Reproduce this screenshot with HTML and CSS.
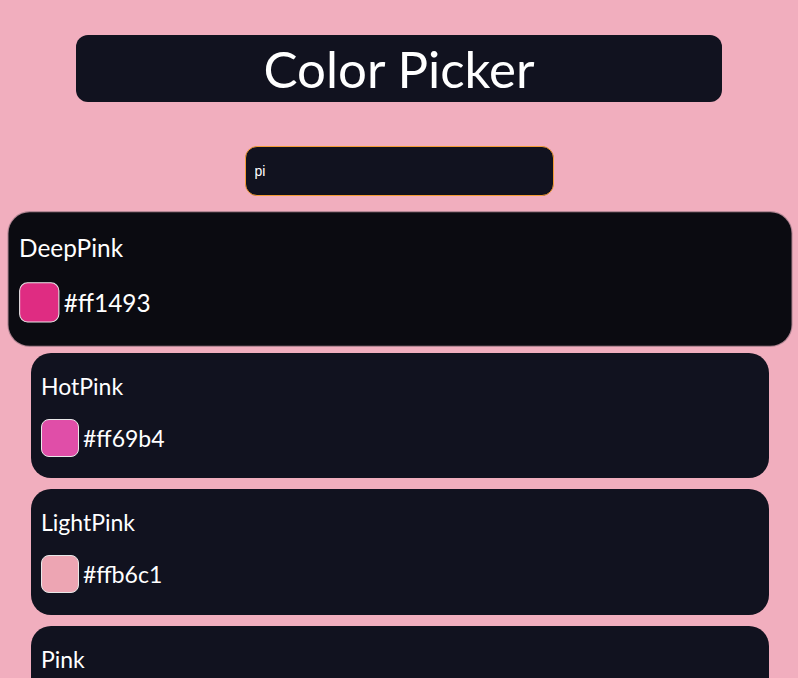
FILE: index.html
```html
<!DOCTYPE html>
<html lang="en">
<head>
    <meta charset="UTF-8">
    <meta name="viewport" content="width=device-width, initial-scale=1.0">
    <title>Color Picker</title>
    <link rel="stylesheet" href="styles.css">
</head>
<body>
    <div class="header">
        <h1>Color Picker</h1>
    </div>

    <div class="search">
        <input type="text" id="search" value="pi">
    </div>

    <div class="colors" id="colors">
        <div class="color-card hovered">
            <p class="name">DeepPink</p>
            <div class="hex-row">
                <div class="swatch" style="background-color: #df2c82"></div>
                <span>#ff1493</span>
            </div>
        </div>
        <div class="color-card">
            <p class="name">HotPink</p>
            <div class="hex-row">
                <div class="swatch" style="background-color: #e04ea8"></div>
                <span>#ff69b4</span>
            </div>
        </div>
        <div class="color-card">
            <p class="name">LightPink</p>
            <div class="hex-row">
                <div class="swatch" style="background-color: #eda5b3"></div>
                <span>#ffb6c1</span>
            </div>
        </div>
        <div class="color-card">
            <p class="name">Pink</p>
            <div class="hex-row">
                <div class="swatch" style="background-color: #f1aebe"></div>
                <span>#ffc0cb</span>
            </div>
        </div>
    </div>
</body>
</html>
```

FILE: styles.css
```css
body {
    margin: 0;
    font-family: Lato, "Noto Sans", sans-serif;
    background-color: #f1aebe;
    color: #ffffff;
    padding: 35px 0 0 0;
}

.header {
    width: 646px;
    height: 67px;
    margin: 0 auto;
    background-color: #11121f;
    border-radius: 12px;
    display: flex;
    align-items: center;
    justify-content: center;
}

.header h1 {
    margin: 0;
    font-size: 51px;
    font-weight: 400;
    line-height: 1;
}

.search {
    display: flex;
    justify-content: center;
    margin-top: 44px;
    margin-bottom: 20px;
}

.search input {
    width: 309px;
    height: 50px;
    box-sizing: border-box;
    background-color: #11121f;
    border: 1px solid #f39b35;
    border-radius: 12px;
    color: #ffffff;
    font-family: "Liberation Sans", Arial, sans-serif;
    font-size: 14px;
    padding: 0 9px;
    outline: none;
}

.colors {
    display: flex;
    flex-direction: column;
    gap: 11px;
    padding: 0 29px 0 31px;
}

.color-card {
    background-color: #11121f;
    border-radius: 20px;
    height: 125.5px;
    box-sizing: border-box;
    padding: 18px 10px 0 10px;
    cursor: pointer;
}

.color-card.hovered {
    background-color: #0b0b11;
    transform: scale(1.061);
    box-shadow: 0 0 0 1px rgba(60, 60, 70, 0.35);
}

.name {
    margin: 0;
    font-size: 23px;
    line-height: 30px;
}

.hex-row {
    display: flex;
    align-items: center;
    gap: 4px;
    margin-top: 18px;
    font-size: 23px;
}

.swatch {
    width: 38px;
    height: 38px;
    box-sizing: border-box;
    border: 1px solid #e8e8e8;
    border-radius: 8px;
}
```
